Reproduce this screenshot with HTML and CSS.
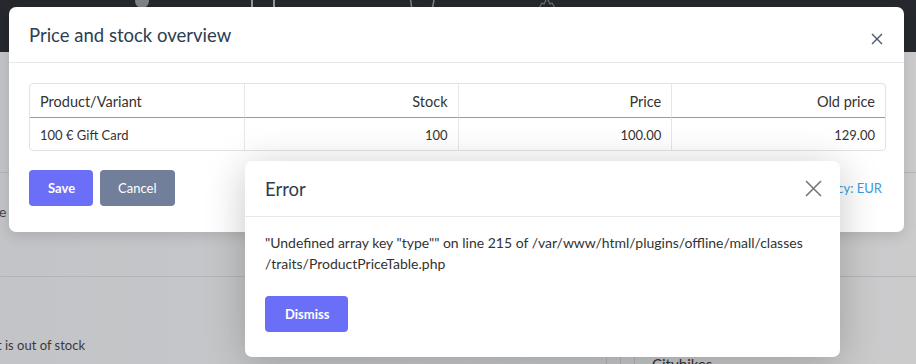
FILE: index.html
```html
<!DOCTYPE html>
<html lang="en">
<head>
  <meta charset="UTF-8">
  <title>Price and stock overview</title>
  <link rel="stylesheet" href="styles.css">
</head>
<body>
  <!-- page behind the dialogs -->
  <div class="topbar">
    <span class="nav-icon nav-user"></span>
    <svg class="nav-icon nav-box" width="26" height="24" viewBox="0 0 26 24"><rect x="2" y="-6" width="22" height="20" rx="3" fill="none" stroke="#b9bdc2" stroke-width="1.5"/></svg>
    <svg class="nav-icon nav-cart" width="32" height="24" viewBox="0 0 32 24"><path d="M1 -4 H7 L9 10 H29 L31 0" fill="none" stroke="#7d8186" stroke-width="1.5"/></svg>
    <svg class="nav-icon nav-gear" width="24" height="24" viewBox="0 0 24 24"><path d="M4 14 L7 9 L9 10 L12 4 L15 10 L17 9 L20 14" fill="none" stroke="#6d7176" stroke-width="1.2"/></svg>
  </div>
  <div class="page">
    <div class="page-row first"></div>
    <div class="page-row second"><span class="clip">e</span></div>
    <div class="page-row third">
      <p class="stock-note">t is out of stock</p>
      <div class="tree">
        <span class="tree-line"></span>
        <span class="tree-line"></span>
        <span class="tree-line"></span>
        <span class="tree-label">Citybikes</span>
      </div>
    </div>
  </div>

  <!-- price and stock dialog -->
  <div class="modal main-modal">
    <div class="modal-header">
      <h3>Price and stock overview</h3>
      <button class="close small" aria-label="Close">
        <svg width="12" height="12" viewBox="0 0 12 12"><path d="M1 1 L11 11 M11 1 L1 11" stroke="#4a5568" stroke-width="1.4"/></svg>
      </button>
    </div>
    <div class="modal-body">
      <table class="price-table">
        <thead>
          <tr>
            <th class="left">Product/Variant</th>
            <th>Stock</th>
            <th>Price</th>
            <th>Old price</th>
          </tr>
        </thead>
        <tbody>
          <tr>
            <td class="left">100 € Gift Card</td>
            <td>100</td>
            <td>100.00</td>
            <td>129.00</td>
          </tr>
        </tbody>
      </table>
      <div class="modal-footer">
        <div class="actions">
          <button class="btn btn-primary btn-save">Save</button>
          <button class="btn btn-secondary">Cancel</button>
        </div>
        <span class="currency">Currency: EUR</span>
      </div>
    </div>
  </div>

  <!-- error popup -->
  <div class="modal error-modal">
    <div class="modal-header">
      <h3>Error</h3>
      <button class="close" aria-label="Close">
        <svg width="17" height="17" viewBox="0 0 17 17"><path d="M1 1 L16 16 M16 1 L1 16" stroke="#777" stroke-width="1.6"/></svg>
      </button>
    </div>
    <div class="error-body">
      <p>"Undefined array key "type"" on line 215 of /var/www/html/plugins/offline/mall/classes<wbr>/traits/ProductPriceTable.php</p>
      <button class="btn btn-primary btn-dismiss">Dismiss</button>
    </div>
  </div>
</body>
</html>
```

FILE: styles.css
```css
* {
  box-sizing: border-box;
}
body {
  margin: 0;
  height: 364px;
  overflow: hidden;
  font-family: 'Lato', 'Noto Sans', sans-serif;
  background: linear-gradient(90deg, #c3c4c7, #c8c9cb 60%, #cbcbcc);
  color: #333;
}

/* background page */
.topbar {
  height: 52px;
  background: #25282c;
  display: flex;
  align-items: flex-start;
  overflow: hidden;
}
.nav-icon {
  display: block;
}
.nav-user {
  width: 14px;
  height: 14px;
  margin: -6px 0 0 135px;
  border-radius: 50%;
  background: #808386;
}
.nav-box {
  margin-left: 101px;
}
.nav-cart {
  margin-left: 127px;
}
.nav-gear {
  margin-left: 100px;
  margin-top: -6px;
}
.page-row {
  border-bottom: 1px solid #b3b5b8;
}
.page-row.first {
  height: 121px;
}
.page-row.second {
  height: 104px;
  padding-top: 30px;
  font-size: 14px;
  color: #444;
}
.clip {
  display: inline-block;
  margin-left: -1px;
}
.third {
  border-bottom: none;
  height: 90px;
}
.stock-note {
  margin: 0;
  padding-top: 60px;
  margin-left: -3px;
  font-size: 13px;
  color: #3a3a3a;
}
.tree {
  display: flex;
  margin: 2px 0 0 606px;
  height: 20px;
}
.tree-line {
  width: 14px;
  border-left: 1px solid #b3b5b8;
}
.tree-label {
  margin-left: 4px;
  font-size: 15px;
  color: #333;
}

/* dialogs */
.modal {
  position: absolute;
  background: #fff;
  border-radius: 7px;
}
.main-modal {
  left: 9px;
  top: 7px;
  width: 895px;
  height: 225px;
  box-shadow: 0 4px 14px rgba(0, 0, 0, 0.12);
}
.error-modal {
  left: 245px;
  top: 161px;
  width: 595px;
  height: 196px;
  box-shadow: 0 6px 40px rgba(0, 0, 0, 0.22);
}
.modal-header {
  height: 56px;
  padding: 0 20px;
  display: flex;
  align-items: center;
  justify-content: space-between;
  border-bottom: 1px solid #e6e8eb;
}
.modal-header h3 {
  margin: 0;
  font-size: 18.5px;
  font-weight: 400;
  color: #2d3e50;
}
.close {
  border: none;
  background: none;
  padding: 0;
  display: flex;
  cursor: pointer;
}
.main-modal .close {
  margin-top: 8px;
  margin-right: 1px;
}
.error-modal .close {
  margin-right: -2px;
}
.modal-body {
  padding: 20px 18px 0 20px;
}
.price-table {
  width: 100%;
  border-collapse: separate;
  border-spacing: 0;
  border: 1px solid #dfe2e6;
  border-radius: 4px;
  table-layout: fixed;
}
.price-table th,
.price-table td {
  text-align: right;
  padding: 0 10px;
  color: #333;
  border-left: 1px solid #e5e7ea;
}
.price-table th:first-child,
.price-table td:first-child {
  border-left: none;
}
.price-table th {
  height: 34px;
  padding-top: 2px;
  font-size: 14.5px;
  font-weight: 400;
  border-bottom: 1px solid #8d9ea6;
}
.price-table td {
  height: 32px;
  padding-top: 2px;
  font-size: 13px;
}
.price-table .left {
  text-align: left;
}
.modal-footer {
  margin-top: 19px;
  display: flex;
  justify-content: space-between;
  align-items: center;
}
.actions {
  display: flex;
  gap: 7px;
}
.btn {
  height: 36px;
  border: none;
  border-radius: 4px;
  font-family: inherit;
  font-size: 13px;
  color: #fff;
  cursor: pointer;
}
.btn-primary {
  background: #6b6ef7;
  font-weight: 700;
  padding: 0 18px;
}
.btn-save {
  padding: 0 18px 0 19px;
}
.btn-secondary {
  background: #727f9a;
  padding: 0 18px;
}
.currency {
  font-size: 13px;
  color: #3a9be0;
  margin-right: 4px;
}
.error-body {
  padding: 15px 20px 0 20px;
}
.error-body p {
  margin: 0;
  font-size: 14px;
  line-height: 21px;
  color: #333;
}
.btn-dismiss {
  margin-top: 22px;
  padding: 0 19px 0 20px;
}
```
